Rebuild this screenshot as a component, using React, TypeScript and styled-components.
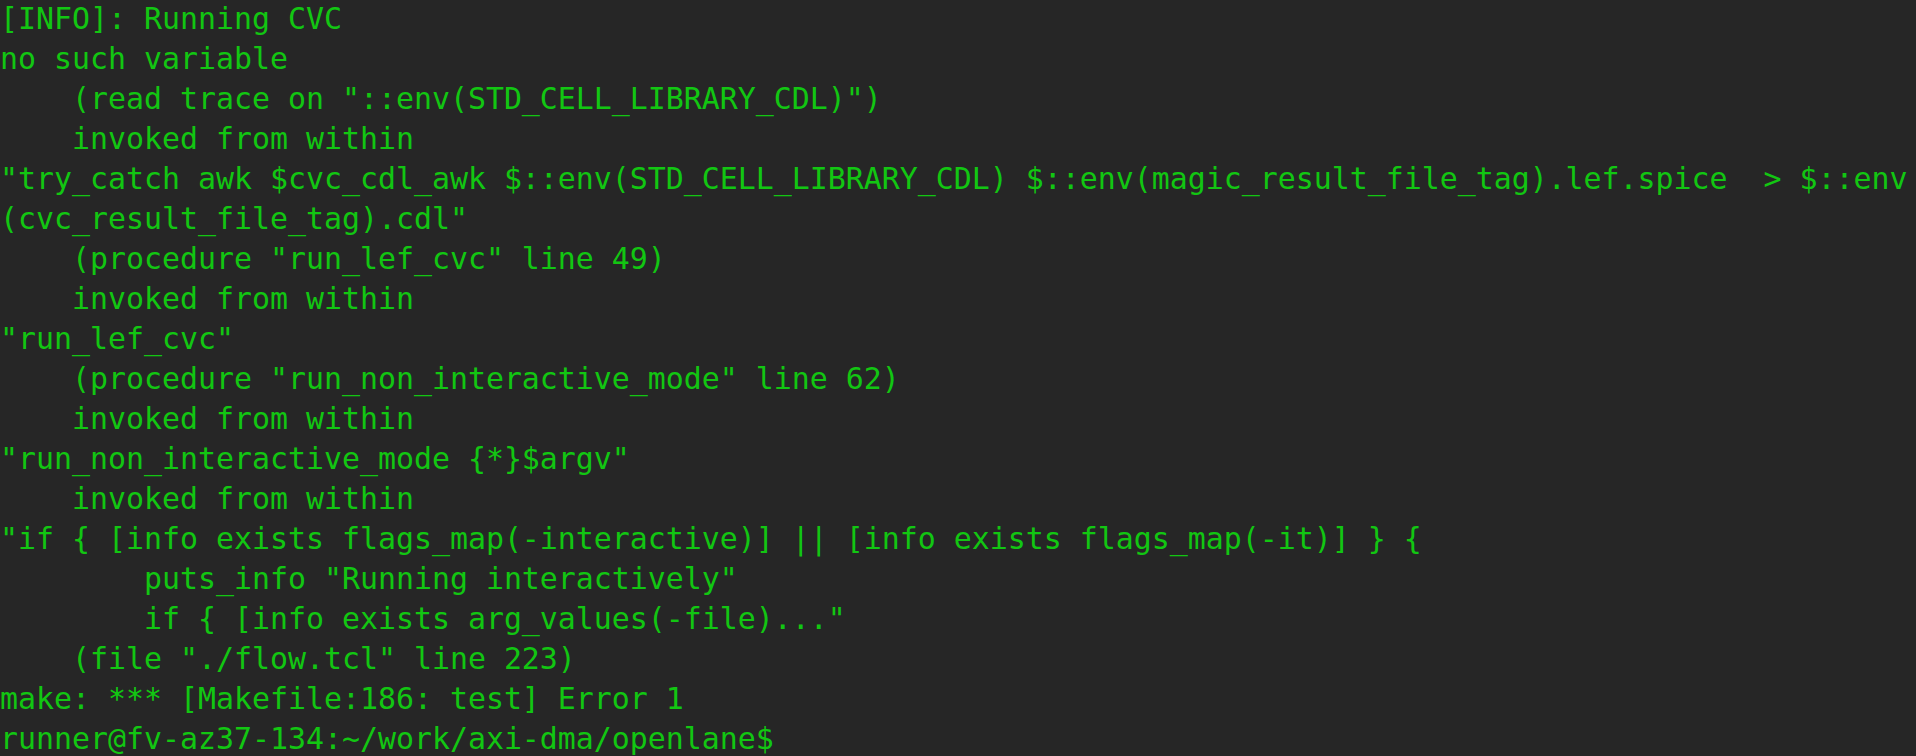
import React from "react";
import styled, { createGlobalStyle } from "styled-components";

const Global = createGlobalStyle`
  html, body {
    margin: 0;
    padding: 0;
    background: #262626;
    overflow: hidden;
  }
`;

const Terminal = styled.div`
  width: 1916px;
  height: 756px;
  box-sizing: border-box;
  background: #262626;
  color: #12c612;
  font-family: "DejaVu Sans Mono", "Liberation Mono", monospace;
  font-size: 29.9px;
  line-height: 40px;
  padding: 0;
  margin-top: -1px;
  display: flex;
  flex-direction: column;
  overflow: hidden;
`;

const Line = styled.div`
  white-space: pre;
  height: 40px;
  flex: none;
`;

const lines = [
  "[INFO]: Running CVC",
  "no such variable",
  '    (read trace on "::env(STD_CELL_LIBRARY_CDL)")',
  "    invoked from within",
  '"try_catch awk $cvc_cdl_awk $::env(STD_CELL_LIBRARY_CDL) $::env(magic_result_file_tag).lef.spice  > $::env',
  '(cvc_result_file_tag).cdl"',
  '    (procedure "run_lef_cvc" line 49)',
  "    invoked from within",
  '"run_lef_cvc"',
  '    (procedure "run_non_interactive_mode" line 62)',
  "    invoked from within",
  '"run_non_interactive_mode {*}$argv"',
  "    invoked from within",
  '"if { [info exists flags_map(-interactive)] || [info exists flags_map(-it)] } {',
  '        puts_info "Running interactively"',
  '        if { [info exists arg_values(-file)..."',
  '    (file "./flow.tcl" line 223)',
  "make: *** [Makefile:186: test] Error 1",
  "runner@fv-az37-134:~/work/axi-dma/openlane$",
];

export default function App() {
  return (
    <>
      <Global />
      <Terminal>
        {lines.map((l, i) => (
          <Line key={i}>{l}</Line>
        ))}
      </Terminal>
    </>
  );
}
